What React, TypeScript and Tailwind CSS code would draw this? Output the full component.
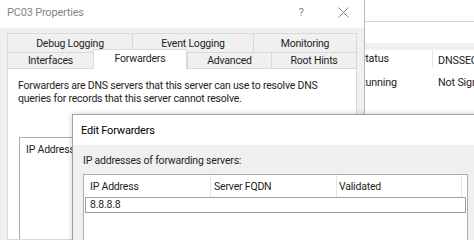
const UI = { fontFamily: 'Roboto, "Noto Sans", Arial, sans-serif' };

const BACK = ["Debug Logging", "Event Logging", "Monitoring"];
const BACK_W = ["w-[125px]", "w-[121px]", "w-[104px]"];
const FRONT = ["Interfaces", "Forwarders", "Advanced", "Root Hints"];
const FRONT_W = ["w-[86px]", "w-[94px]", "w-[84px]", "w-[86px]"];

function BackWindow() {
  return (
    <div className="absolute inset-0 bg-white text-[10.75px] tracking-[-0.15px] text-[#222]">
      <div className="h-[22px] border-b border-[#d4d4d4]" />
      <div className="h-[21px]" />
      <div className="h-[7px] bg-[#f0f0f0]" />
      <div className="flex h-[22px] items-center">
        <div className="w-[359px] shrink-0" />
        <div className="w-[74px] shrink-0 h-[17px] self-start border-r border-[#e5e5e5] flex items-end">Status</div>
        <div className="pl-[5px] whitespace-nowrap">DNSSEC</div>
      </div>
      <div className="flex h-[22px] items-center">
        <div className="w-[359px] shrink-0" />
        <div className="w-[74px] shrink-0">Running</div>
        <div className="pl-[5px] whitespace-nowrap">Not Signed</div>
      </div>
    </div>
  );
}

function PropertiesDialog() {
  return (
    <div className="absolute left-0 top-0 w-[365px] h-[240px] bg-[#f0f0f0] border-r border-[#b9b9b9] flex flex-col text-[10.5px] tracking-[-0.2px] text-[#1e1e1e]">
      <div className="h-[28px] shrink-0 bg-white flex items-center text-[#868686]">
        <span className="pl-[7px] flex-1 -mt-[2px] text-[11px]">PC03 Properties</span>
        <span className="w-[12px] text-center -mt-[2px] text-[11.5px]">?</span>
        <span className="w-[28px]" />
        <span className="w-[16px] flex justify-center -mt-[3px]">
          <svg width="11" height="11" viewBox="0 0 11 11" fill="none" stroke="#8a8a8a" strokeWidth="1">
            <path d="M0.5 0.5 10.5 10.5M10.5 0.5 0.5 10.5" />
          </svg>
        </span>
        <span className="w-[13px]" />
      </div>
      <div className="h-[5px] shrink-0" />
      <div className="pl-[7px] shrink-0">
        <div className="flex h-[19px]">
          {BACK.map((t, i) => (
            <div key={t} className={`${BACK_W[i]} border-t border-l border-[#d9d9d9] ${i === 2 ? "border-r" : ""} flex items-center justify-center pt-[2px]`}>{t}</div>
          ))}
        </div>
        <div className="flex h-[16px] items-end">
          {FRONT.map((t, i) =>
            i === 1 ? (
              <div key={t} className={`${FRONT_W[i]} h-[20px] bg-white border-t border-l border-r border-[#d9d9d9] flex items-center justify-center relative z-10 -mb-[1px] pb-[2px]`}>{t}</div>
            ) : (
              <div key={t} className={`${FRONT_W[i]} h-full border-t border-l border-[#d9d9d9] ${i === 3 ? "border-r" : ""} flex items-center justify-center pt-[1px]`}>{t}</div>
            )
          )}
        </div>
      </div>
      <div className="ml-[7px] w-[350px] flex-1 min-h-0 overflow-hidden bg-white border border-[#d9d9d9] pt-[10px] pl-[10px]">
        <p className="leading-[13px] whitespace-nowrap">Forwarders are DNS servers that this server can use to resolve DNS<br />queries for records that this server cannot resolve.</p>
        <div className="mt-[32px] ml-[1px] h-[120px] border border-[#adadad] pl-[6px] pt-[5px] leading-[13px]">IP Address</div>
      </div>
    </div>
  );
}

function EditForwarders() {
  return (
    <div className="absolute left-[72px] top-[114px] w-[420px] h-[140px] bg-[#f0f0f0] border border-[#a0a0a0] shadow-[0_0_6px_rgba(0,0,0,0.2)] text-[10.5px] tracking-[-0.2px] text-[#1e1e1e]">
      <div className="h-[30px] bg-white flex items-center pl-[8px] pt-[3px] text-[11px] text-black">Edit Forwarders</div>
      <div className="pl-[10px] pt-[9px] leading-[13px]">IP addresses of forwarding servers:</div>
      <div className="ml-[10px] mt-[7px] w-[385px] h-[80px] bg-white border border-[#adadad]">
        <div className="flex h-[22px] items-center">
          <div className="w-[127px] h-full border-r border-[#e5e5e5] pl-[6px] flex items-center pt-[2px]">IP Address</div>
          <div className="w-[126px] h-full border-r border-[#e5e5e5] pl-[3px] flex items-center pt-[2px]">Server FQDN</div>
          <div className="w-[125px] h-full border-r border-[#e5e5e5] pl-[2px] flex items-center pt-[2px]">Validated</div>
        </div>
        <div className="ml-[1px] w-[381px] h-[16px] border border-[#9f9f9f] pl-[4px] flex items-center">8.8.8.8</div>
      </div>
    </div>
  );
}

export default function App() {
  return (
    <div className="relative w-[474px] h-[240px] overflow-hidden bg-white" style={UI}>
      <BackWindow />
      <PropertiesDialog />
      <EditForwarders />
    </div>
  );
}
